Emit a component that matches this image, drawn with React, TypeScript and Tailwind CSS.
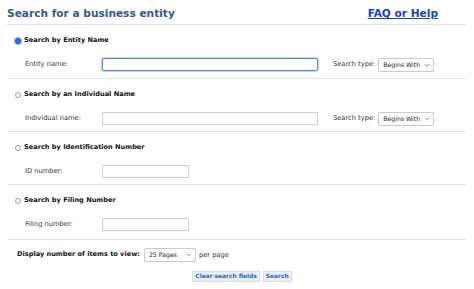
import React from "react";

const font = "font-['DejaVu_Sans',Verdana,sans-serif]";

function Radio({ checked }: { checked?: boolean }) {
  return checked ? (
    <span className="inline-block w-[6px] h-[6px] rounded-full bg-[#3b6fd8] border border-[#2a56b8] shadow-[0_0_0_1px_#9fb8ea]" />
  ) : (
    <span className="inline-block w-[6px] h-[6px] rounded-full bg-white border border-[#9a9a9a]" />
  );
}

function Select({ value, width }: { value: string; width: string }) {
  return (
    <div
      className={`flex items-center justify-between h-[14px] ${width} border border-[#c9c9c9] bg-white rounded-[2px] pl-[4px] pr-[3px] text-[6.2px] text-[#222]`}
    >
      <span>{value}</span>
      <svg width="6" height="4" viewBox="0 0 6 4" className="text-[#888]">
        <path d="M0.8 0.8 L3 3 L5.2 0.8" fill="none" stroke="currentColor" strokeWidth="0.8" />
      </svg>
    </div>
  );
}

function Section({
  title,
  label,
  checked,
  inputWidth,
  focused,
  searchType,
  pb = "pb-[7px]",
}: {
  title: string;
  label: string;
  checked?: boolean;
  inputWidth: string;
  focused?: boolean;
  searchType?: boolean;
  pb?: string;
}) {
  return (
    <div className={`border-b border-[#e2e2e2] pt-[11px] ${pb}`}>
      <div className="flex items-center h-[10px] pl-[7px] gap-[3px]">
        <Radio checked={checked} />
        <span className="font-bold text-[6.6px] text-[#111]">{title}</span>
      </div>
      <div className="flex items-center h-[13px] mt-[12px]">
        <span className="w-[94px] pl-[17px] text-[6.7px] text-[#333]">{label}</span>
        <div
          className={`h-[13px] ${inputWidth} bg-white ${
            focused
              ? "border border-[#5a86cf] rounded-[2px] shadow-[0_0_0_1px_#c7d7f2]"
              : "border border-[#cfcfcf]"
          }`}
        />
        {searchType && (
          <div className="flex items-center ml-[15px] gap-[3px]">
            <span className="text-[6.7px] text-[#333]">Search type:</span>
            <Select value="Begins With" width="w-[56px]" />
          </div>
        )}
      </div>
    </div>
  );
}

export default function App() {
  return (
    <div className={`w-[474px] h-[289px] bg-white overflow-hidden ${font}`}>
      <div className="mx-[8px]">
        <div className="flex items-end justify-between h-[25px] pb-[5px] border-b border-[#e2e2e2] -ml-[1px]">
          <h1 className="font-bold text-[10.6px] text-[#34597f] leading-none">
            Search for a business entity
          </h1>
          <a className="font-bold text-[10.6px] text-[#1d3fb0] underline leading-none mr-[28px]">
            FAQ or Help
          </a>
        </div>

        <Section
          title="Search by Entity Name"
          label="Entity name:"
          checked
          inputWidth="w-[216px]"
          focused
          searchType
        />
        <Section
          title="Search by an Individual Name"
          label="Individual name:"
          inputWidth="w-[216px]"
          searchType
          pb="pb-[6px]"
        />
        <Section
          title="Search by Identification Number"
          label="ID number:"
          inputWidth="w-[87px]"
          pb="pb-[6px]"
        />
        <Section
          title="Search by Filing Number"
          label="Filing number:"
          inputWidth="w-[87px]"
          pb="pb-[8px]"
        />

        <div className="flex items-center h-[14px] mt-[8px] pl-[9px]">
          <span className="font-bold text-[6.6px] text-[#111]">
            Display number of items to view:
          </span>
          <div className="ml-[4px]">
            <Select value="25 Pages" width="w-[52px]" />
          </div>
          <span className="ml-[3px] text-[6.7px] text-[#333]">per page</span>
        </div>

        <div className="flex justify-center gap-[3px] mt-[9px] pl-[10px]">
          <button className="h-[11px] px-[2px] bg-[#e9edf4] border border-[#d4dbe6] text-[5.9px] font-bold text-[#2f64b8] leading-none">
            Clear search fields
          </button>
          <button className="h-[11px] px-[2px] bg-[#e9edf4] border border-[#d4dbe6] text-[5.9px] font-bold text-[#2f64b8] leading-none">
            Search
          </button>
        </div>
      </div>
    </div>
  );
}
